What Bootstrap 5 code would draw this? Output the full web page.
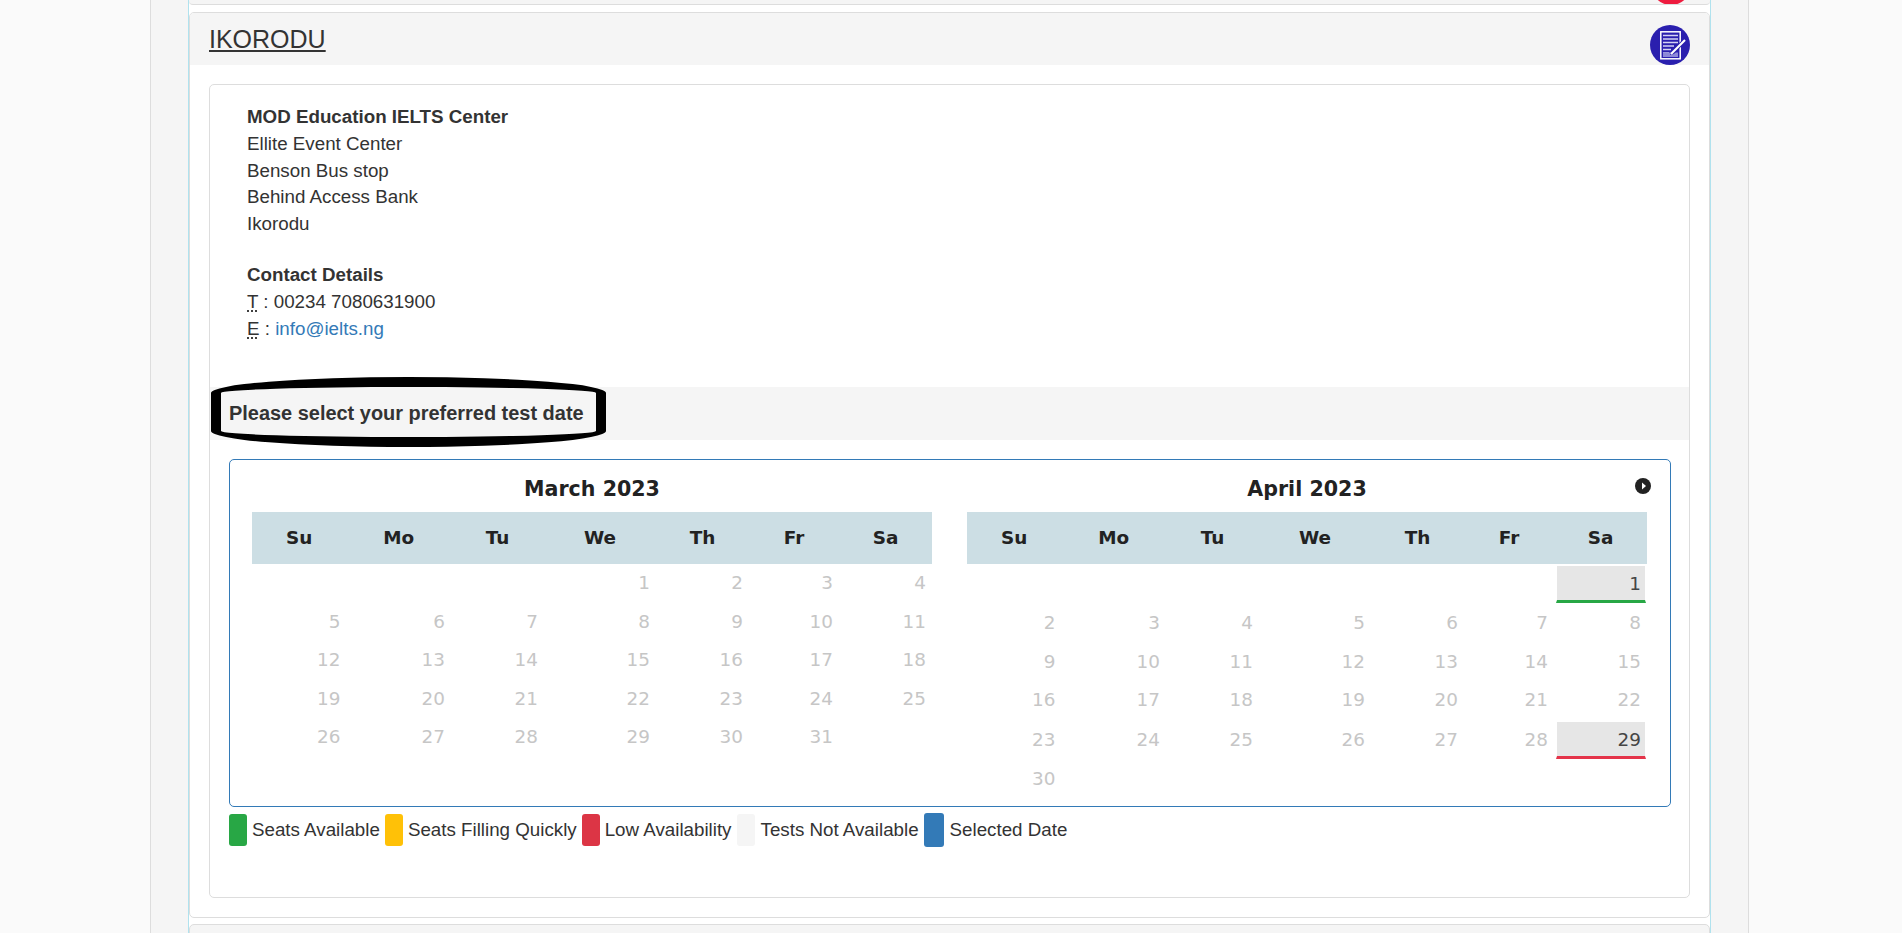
<!DOCTYPE html>
<html lang="en">
<head>
<meta charset="utf-8">
<title>IELTS test date</title>
<link href="https://cdn.jsdelivr.net/npm/bootstrap@5.3.0/dist/css/bootstrap.min.css" rel="stylesheet">
<style>
html,body{height:100%;overflow:hidden}
body{background:#fafafa;color:#333;font-family:"Liberation Sans",Arial,sans-serif;font-size:18.75px;line-height:26.8px}
.shell{width:1599px;height:933px;margin-left:150px;background:#f5f5f5;border-left:1px solid #ddd;border-right:1px solid #ddd;overflow:hidden}
.column{width:1523px;margin-left:37px;background:#fff;border-left:1px solid #b0e2ee;border-right:1px solid #b0e2ee;height:933px}
.stub-panel{height:5px;background:#f5f5f5;border-bottom:1px solid #ddd;border-radius:0 0 4px 4px;position:relative;overflow:hidden}
.stub-dot{position:absolute;right:19px;top:-35px;width:40px;height:40px;border-radius:50%;background:#ee1c3f}
.centre-panel{margin-top:7px;height:906px;background:#fff;border:1px solid #ddd;border-radius:5px;position:relative}
.centre-head{height:52px;background:#f5f5f5;border-radius:4px 4px 0 0;padding:0 19px;font-size:25px;line-height:52px}
.centre-head a{color:#333;text-decoration:underline}
.edit-dot{position:absolute;right:19px;top:12px;width:40px;height:40px}
.centre-body{margin:19px 19px 0;height:814px;border:1px solid #ddd;border-radius:5px;background:#fff}
.addr{padding:19px 0 0 37px;height:302px}
.addr b{color:#333}
.addr .gap-line{height:24.5px}
.addr abbr{text-decoration:underline dotted;text-underline-offset:2px;cursor:help}
.addr a{color:#337ab7;text-decoration:none}
.date-band{height:53px;background:#f5f5f5;position:relative}
.date-pill{position:absolute;left:1px;top:-10px;width:395px;height:70px;border:10px solid #000;border-radius:50%/16px;display:flex;align-items:center;padding:2px 0 0 8px;font-size:19.95px;font-weight:700;color:#333;white-space:nowrap}
.cal-box{margin:19px 18px 0 19px;height:348px;border:1px solid #337ab7;border-radius:5px;position:relative;padding:0 22px;display:flex;gap:35px}
.cal-month{width:680px;flex:none;font-family:"DejaVu Sans",Verdana,sans-serif}
.cal-title{height:52px;text-align:center;font-weight:700;font-size:20.6px;line-height:58px;color:#222}
.cal-table{width:680px;table-layout:fixed;border-collapse:separate;border-spacing:0;font-size:18.4px}
.cal-table th{background:#ccdee4;height:52px;text-align:center;font-weight:700;color:#222;padding:1px 0 0}
.cal-table th:nth-child(1){width:94.5px}
.cal-table th:nth-child(2){width:104.5px}
.cal-table th:nth-child(3){width:93px}
.cal-table th:nth-child(4){width:112px}
.cal-table th:nth-child(5){width:93px}
.cal-table th:nth-child(6){width:90px}
.cal-table th:nth-child(7){width:93px}
.cal-table td{text-align:right;color:#c6c6c6;padding:0 6px 0 0;height:38.5px;line-height:28px}
.cal-table td.open-cell{padding:0;color:#454545}
.open-inner{display:block;height:37px;margin:2px 1px 1px 2px;padding-right:4px;background:#e6e6e6;background-clip:padding-box;line-height:35px;border-bottom:3px solid;border-left:1px solid transparent;border-right:1px solid transparent}
.open-green{border-bottom-color:#28a745}
.open-red{border-bottom-color:#e4344a}
.cal-next{position:absolute;right:19px;top:18px;width:16px;height:16px}
.legend-row{margin:6px 19px 0;display:flex;align-items:center;height:34px;white-space:nowrap}
.swatch{display:block;height:32px;border-radius:3px;flex:none}
.legend-text{margin:0 5px 0 5px}
.sw-green{background:#28a745;width:18px}
.sw-yellow{background:#ffc107;width:18px}
.sw-red{background:#dc3545;width:18px}
.sw-grey{background:#f5f5f5;width:18px}
.sw-blue{background:#337ab7;width:20px;height:34px}
.legend-text.wide{margin-left:6px}
.next-panel{margin-top:6px;height:40px;background:#f5f5f5;border:1px solid #ddd;border-radius:5px 5px 0 0}
</style>
</head>
<body>
<div class="shell">
  <div class="column">
    <div class="stub-panel"><span class="stub-dot"></span></div>
    <div class="centre-panel">
      <div class="centre-head"><a href="#">IKORODU</a></div>
      <svg class="edit-dot" viewBox="0 0 40 40" aria-hidden="true">
        <circle cx="20" cy="20" r="20" fill="#2a1fae"/>
        <rect x="10.8" y="6.800" width="19.4" height="27" fill="none" stroke="#fff" stroke-width="1.5"/>
        <path d="M13 10.500h15M13 14h15M13 17.500h15M13 21h11M13 24.500h8M13 28h6" stroke="#d5d3f3" stroke-width="1.300" fill="none"/>
        <rect x="13" y="27.500" width="15" height="4.500" fill="#8d88d8"/>
        <path d="M20 30l1-3L33 14l3 2.500L24 29z" fill="#2a1fae"/>
        <path d="M21 29L35 15" stroke="#fff" stroke-width="2.200" fill="none"/>
      </svg>
      <div class="centre-body">
        <div class="addr">
          <b>MOD Education IELTS Center</b><br>
          Ellite Event Center<br>
          Benson Bus stop<br>
          Behind Access Bank<br>
          Ikorodu
          <div class="gap-line"></div>
          <b>Contact Details</b><br>
          <abbr title="Telephone">T</abbr> : 00234 7080631900<br>
          <abbr title="Email">E</abbr> : <a href="#">info@ielts.ng</a>
        </div>
        <div class="date-band"><div class="date-pill">Please select your preferred test date</div></div>
        <div class="cal-box">
          <div class="cal-month">
            <div class="cal-title">March 2023</div>
            <table class="cal-table">
              <thead><tr><th>Su</th><th>Mo</th><th>Tu</th><th>We</th><th>Th</th><th>Fr</th><th>Sa</th></tr></thead>
              <tbody>
                <tr><td></td><td></td><td></td><td>1</td><td>2</td><td>3</td><td>4</td></tr>
                <tr><td>5</td><td>6</td><td>7</td><td>8</td><td>9</td><td>10</td><td>11</td></tr>
                <tr><td>12</td><td>13</td><td>14</td><td>15</td><td>16</td><td>17</td><td>18</td></tr>
                <tr><td>19</td><td>20</td><td>21</td><td>22</td><td>23</td><td>24</td><td>25</td></tr>
                <tr><td>26</td><td>27</td><td>28</td><td>29</td><td>30</td><td>31</td><td></td></tr>
              </tbody>
            </table>
          </div>
          <div class="cal-month">
            <div class="cal-title">April 2023</div>
            <table class="cal-table">
              <thead><tr><th>Su</th><th>Mo</th><th>Tu</th><th>We</th><th>Th</th><th>Fr</th><th>Sa</th></tr></thead>
              <tbody>
                <tr><td></td><td></td><td></td><td></td><td></td><td></td><td class="open-cell"><span class="open-inner open-green">1</span></td></tr>
                <tr><td>2</td><td>3</td><td>4</td><td>5</td><td>6</td><td>7</td><td>8</td></tr>
                <tr><td>9</td><td>10</td><td>11</td><td>12</td><td>13</td><td>14</td><td>15</td></tr>
                <tr><td>16</td><td>17</td><td>18</td><td>19</td><td>20</td><td>21</td><td>22</td></tr>
                <tr><td>23</td><td>24</td><td>25</td><td>26</td><td>27</td><td>28</td><td class="open-cell"><span class="open-inner open-red">29</span></td></tr>
                <tr><td>30</td><td></td><td></td><td></td><td></td><td></td><td></td></tr>
              </tbody>
            </table>
          </div>
          <svg class="cal-next" viewBox="0 0 16 16" aria-hidden="true"><circle cx="8" cy="8" r="8" fill="#222"/><path d="M7 4.500l4 3.500-4 3.500z" fill="#fff"/></svg>
        </div>
        <div class="legend-row">
          <span class="swatch sw-green"></span><span class="legend-text">Seats Available</span>
          <span class="swatch sw-yellow"></span><span class="legend-text">Seats Filling Quickly</span>
          <span class="swatch sw-red"></span><span class="legend-text">Low Availability</span>
          <span class="swatch sw-grey"></span><span class="legend-text wide">Tests Not Available</span>
          <span class="swatch sw-blue"></span><span class="legend-text wide">Selected Date</span>
        </div>
      </div>
    </div>
    <div class="next-panel"></div>
  </div>
</div>
<script src="https://cdn.jsdelivr.net/npm/bootstrap@5.3.0/dist/js/bootstrap.bundle.min.js"></script>
</body>
</html>
